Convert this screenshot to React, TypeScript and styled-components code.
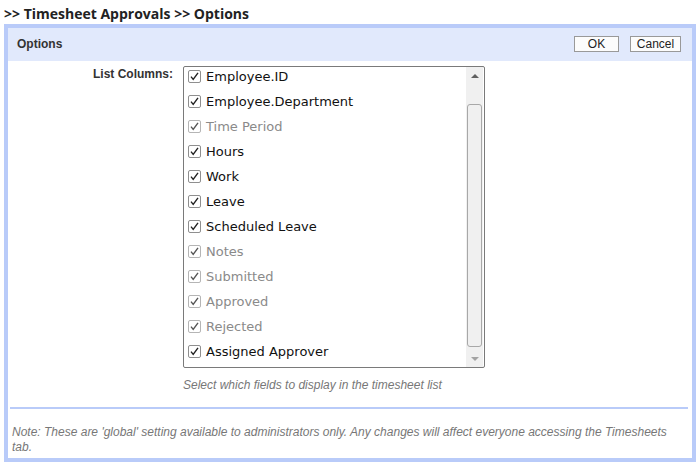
import { createGlobalStyle } from 'styled-components';
import styled from 'styled-components';

const GlobalStyle = createGlobalStyle`
  body {
    margin: 0;
    background: #fff;
    font-family: "Liberation Sans", Arial, sans-serif;
  }
`;

const columns = [
  { label: 'Employee.ID', enabled: true },
  { label: 'Employee.Department', enabled: true },
  { label: 'Time Period', enabled: false },
  { label: 'Hours', enabled: true },
  { label: 'Work', enabled: true },
  { label: 'Leave', enabled: true },
  { label: 'Scheduled Leave', enabled: true },
  { label: 'Notes', enabled: false },
  { label: 'Submitted', enabled: false },
  { label: 'Approved', enabled: false },
  { label: 'Rejected', enabled: false },
  { label: 'Assigned Approver', enabled: true },
];

function App() {
  return (
    <>
      <GlobalStyle />
      <Page>
        <Title>&gt;&gt; Timesheet Approvals &gt;&gt; Options</Title>
        <Panel>
          <PanelHeader>
            <HeaderTitle>Options</HeaderTitle>
            <ButtonGroup>
              <Button $width={45}>OK</Button>
              <Button $width={51}>Cancel</Button>
            </ButtonGroup>
          </PanelHeader>
          <FormRow>
            <FieldLabel>List Columns:</FieldLabel>
            <Field>
              <ListBox>
                <Items>
                  {columns.map((c) => (
                    <Item key={c.label} $enabled={c.enabled}>
                      <Check $enabled={c.enabled}>
                        <svg width='11' height='11' viewBox='0 0 11 11'>
                          <path
                            d='M2 5.6 L4.2 8.4 L9 1.8'
                            fill='none'
                            stroke={c.enabled ? '#222' : '#555'}
                            strokeWidth='1.4'
                          />
                        </svg>
                      </Check>
                      {c.label}
                    </Item>
                  ))}
                </Items>
                <Scrollbar>
                  <Arrow $up />
                  <Thumb />
                  <Arrow />
                </Scrollbar>
              </ListBox>
              <Hint>Select which fields to display in the timesheet list</Hint>
            </Field>
          </FormRow>
          <Divider />
          <Note>
            Note: These are 'global' setting available to administrators only. Any changes will
            affect everyone accessing the Timesheets tab.
          </Note>
        </Panel>
      </Page>
    </>
  );
}

const Page = styled.div`
  width: 700px;
  height: 466px;
  padding: 4px 4px 0;
  box-sizing: border-box;
`;

const Title = styled.div`
  font-family: 'Open Sans', sans-serif;
  font-weight: bold;
  font-size: 14px;
  line-height: 20px;
  color: #222;
`;

const Panel = styled.div`
  width: 692px;
  height: 438px;
  box-sizing: border-box;
  border: 4px solid #b9cbf9;
`;

const PanelHeader = styled.div`
  height: 33px;
  box-sizing: border-box;
  padding: 0 11px 1px 9px;
  background: #e1e9fc;
  display: flex;
  align-items: center;
  justify-content: space-between;
`;

const HeaderTitle = styled.div`
  font-weight: bold;
  font-size: 12px;
  color: #333;
`;

const ButtonGroup = styled.div`
  display: flex;
  gap: 11px;
`;

const Button = styled.button<{ $width: number }>`
  width: ${(p) => p.$width}px;
  height: 16px;
  padding: 0;
  border: 1px solid #999;
  background: #fcfcfc;
  font-family: 'Liberation Sans', Arial, sans-serif;
  font-size: 12px;
  line-height: 14px;
  color: #222;
`;

const FormRow = styled.div`
  display: grid;
  grid-template-columns: 165px 1fr;
  column-gap: 10px;
  padding-top: 5px;
`;

const FieldLabel = styled.div`
  text-align: right;
  font-weight: bold;
  font-size: 12px;
  color: #333;
  padding-top: 1px;
`;

const Field = styled.div`
  display: flex;
  flex-direction: column;
`;

const ListBox = styled.div`
  width: 302px;
  height: 302px;
  box-sizing: border-box;
  border: 1px solid #7a7a7a;
  border-radius: 2px;
  display: flex;
`;

const Items = styled.div`
  flex: 1;
  display: flex;
  flex-direction: column;
  gap: 7px;
  padding: 0 0 0 4px;
`;

const Item = styled.div<{ $enabled: boolean }>`
  height: 18px;
  display: flex;
  align-items: center;
  gap: 5px;
  font-family: 'DejaVu Sans', Verdana, sans-serif;
  font-size: 13px;
  color: ${(p) => (p.$enabled ? '#111' : '#8a8a8a')};
`;

const Check = styled.span<{ $enabled: boolean }>`
  width: 13px;
  height: 13px;
  box-sizing: border-box;
  border: 1px solid ${(p) => (p.$enabled ? '#8f8f8f' : '#b5b5b5')};
  border-radius: 2px;
  background: #fff;
  display: flex;
  align-items: center;
  justify-content: center;
`;

const Scrollbar = styled.div`
  width: 17px;
  margin-right: 1px;
  background: #f0f0f0;
  display: flex;
  flex-direction: column;
  align-items: center;
`;

const Arrow = styled.div<{ $up?: boolean }>`
  height: 17px;
  width: 100%;
  flex: none;
  display: flex;
  align-items: center;
  justify-content: center;

  &::after {
    content: '';
    border-left: 4px solid transparent;
    border-right: 4px solid transparent;
    ${(p) => (p.$up ? 'border-bottom: 4px solid #606060;' : 'border-top: 4px solid #a3a3a3;')}
  }
`;

const Thumb = styled.div`
  flex: 1;
  width: 15px;
  box-sizing: border-box;
  margin: 20px 0 3px;
  border: 1px solid #a8a8a8;
  border-radius: 3px;
  background: #f0f0f0;
`;

const Hint = styled.div`
  margin-top: 10px;
  font-style: italic;
  font-size: 12px;
  color: #777;
`;

const Divider = styled.div`
  height: 2px;
  margin: 15px 4px 0 2px;
  background: #b9cbf9;
`;

const Note = styled.div`
  margin: 16px 0 0 4px;
  width: 670px;
  font-style: italic;
  font-size: 12px;
  line-height: 15px;
  color: #777;
`;

export default App;
